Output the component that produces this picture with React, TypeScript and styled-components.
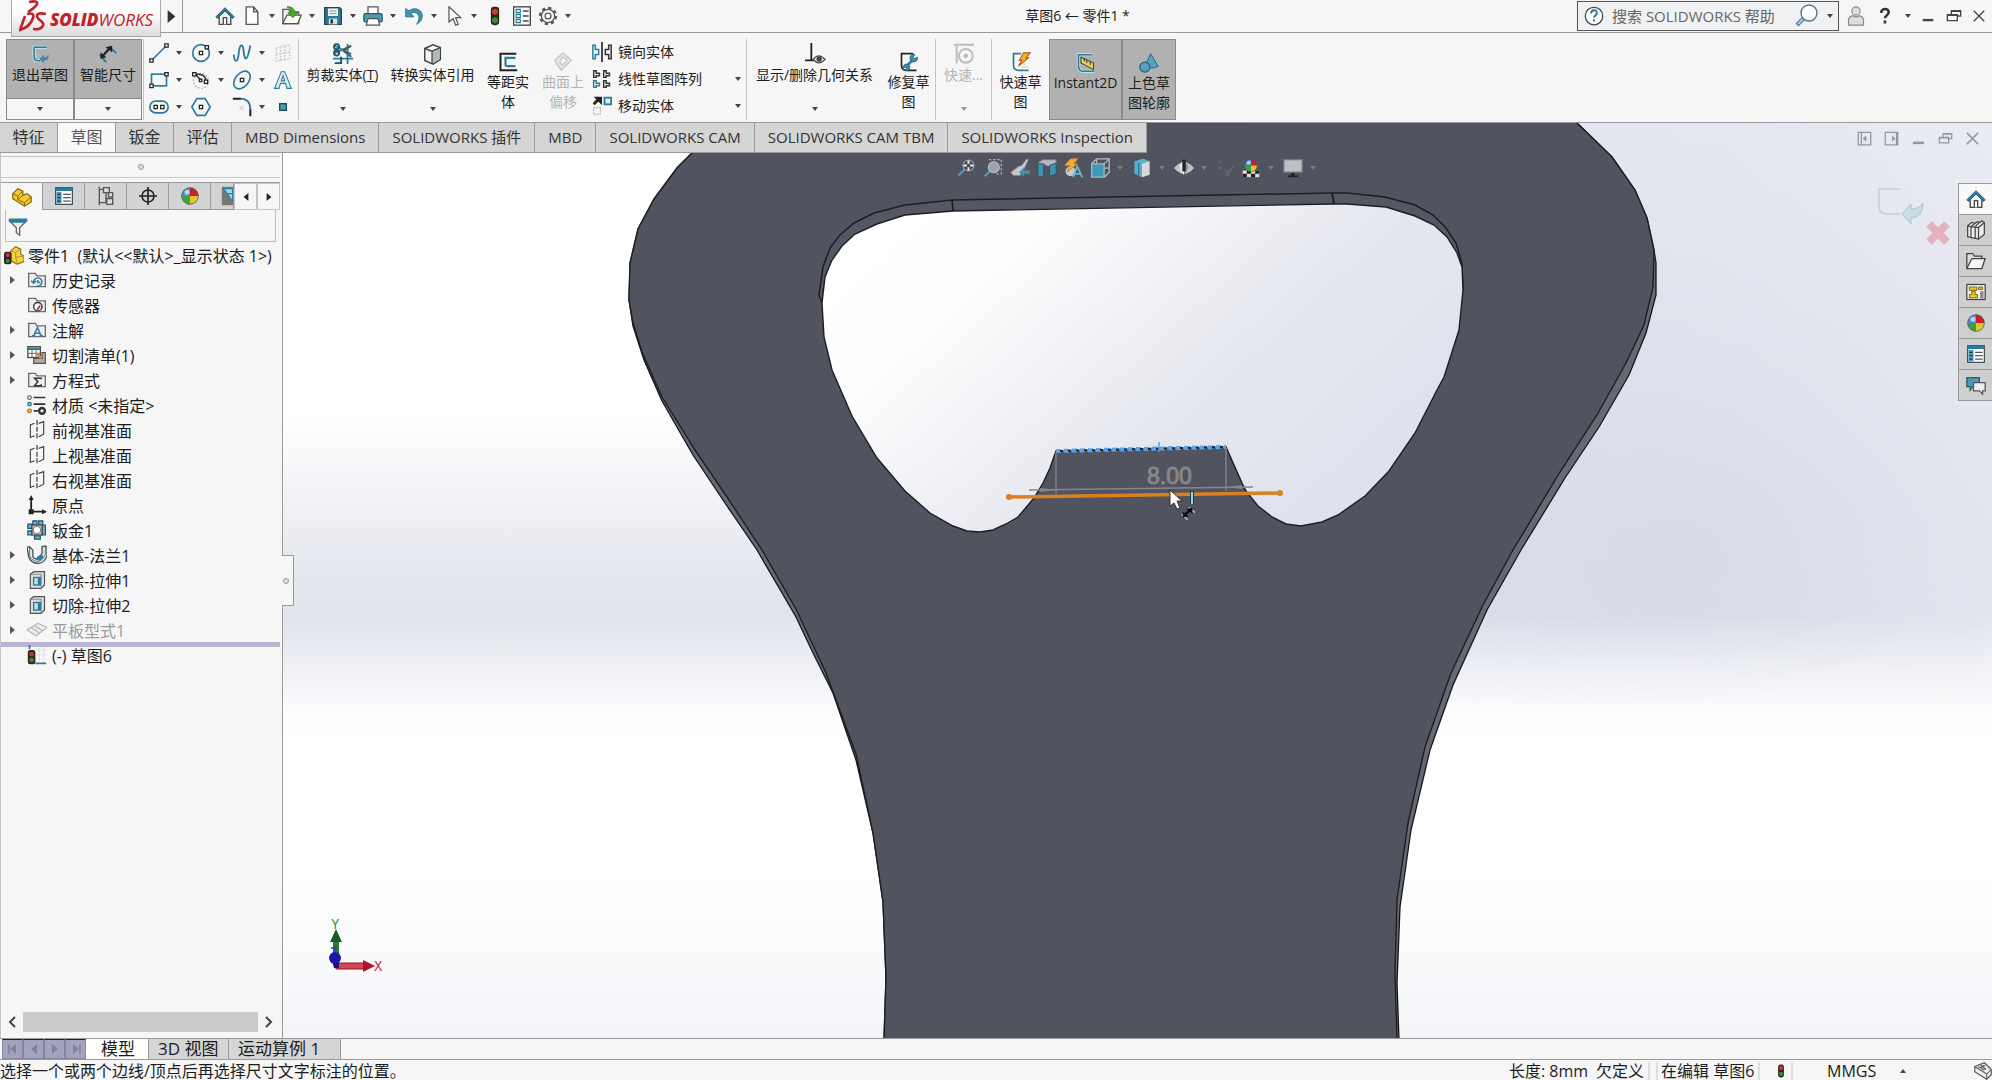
import React from "react";
import styled, { createGlobalStyle } from "styled-components";

const TEAL = "#2b7c9b";
const LINE = "#9a9a9a";

const GlobalStyle = createGlobalStyle`
  * { box-sizing: border-box; }
  body { margin: 0; background: #f6f6f6; overflow: hidden; }
  body, button, input {
    font-family: "Open Sans", "Noto Sans CJK SC", sans-serif;
    font-size: 15px;
    color: #1c1c1c;
  }
  button { border: 0; padding: 0; background: none; color: inherit; }
`;

/* ---------- icons ---------- */

const folder = (
  <path d="M2 20V4h8l2 3h10v13z" fill="#eee" stroke="#6d6d6d" strokeWidth="1.6" />
);
const plane = (
  <>
    <path d="M9 4L4 6v15l5-2M14 4l6-2v15l-6 3" fill="none" stroke="#444" strokeWidth="1.4" />
    <path d="M12 0v24" stroke="#444" strokeWidth="1.5" strokeDasharray="6 2" />
  </>
);
const cut = (
  <>
    <path d="M4 5l4-3h13v16l-4 4H4z" fill="#dcdcdc" stroke="#555" strokeWidth="1.4" />
    <path d="M4 5h13v17" fill="none" stroke="#777" />
    <rect x="8" y="9" width="8" height="9" fill="#bfe3ef" stroke={TEAL} strokeWidth="1.6" />
    <path d="M13 9h3v9h-3z" fill={TEAL} />
  </>
);
const light = (
  <>
    <rect x="7" y="1" width="10" height="22" rx="4" fill="#2c2420" />
    <circle cx="12" cy="7" r="3.6" fill="#d0392f" />
    <circle cx="12" cy="17" r="3.6" fill="#2f8f33" />
  </>
);
const ball = (
  <>
    <path d="M12 12V2a10 10 0 0 1 10 10z" fill="#c8202a" />
    <path d="M12 12H2A10 10 0 0 1 12 2z" fill="#4b8ae0" />
    <path d="M12 12v10A10 10 0 0 1 2 12z" fill="#3ba33b" />
    <path d="M12 12h10a10 10 0 0 1-10 10z" fill="#e6c52b" />
    <circle cx="12" cy="12" r="10" fill="none" stroke="#555" strokeWidth="1" />
    <circle cx="8.5" cy="7.5" r="3" fill="#fff" opacity=".6" />
  </>
);
const list = (
  <>
    <rect x="2" y="2" width="20" height="20" fill="#fff" stroke="#30454f" strokeWidth="1.4" />
    <rect x="2" y="2" width="20" height="4" fill={TEAL} />
    <rect x="3" y="7" width="6" height="14" fill="#4e9dba" />
    <path d="M4 10h4M4 14h4M4 18h4" stroke="#12394a" strokeWidth="1.5" />
    <path d="M11 10h9M11 14h9M11 18h9" stroke="#555" strokeWidth="1.5" />
  </>
);
const home = (
  <>
    <path d="M5 12v10h14V12l-7-7z" fill="#f2f2f2" stroke="#444" strokeWidth="1.6" />
    <path d="M10 22v-8h4v8" fill="#fff" stroke="#444" strokeWidth="1.5" />
    <path d="M1 13L12 2l11 11-2 2-9-9-9 9z" fill={TEAL} stroke="#1d566d" />
  </>
);
const block = (
  <>
    <path d="M1 8l6-6 6 3v5l5-2 5 4v6l-8 5L1 14z" fill="#f3cd2e" stroke="#7a6010" strokeWidth="1.4" />
    <path d="M1 8l6 3 6-6M7 11v4l8 4 8-7M15 19v4M13 10l-6 5" fill="none" stroke="#8a6d10" strokeWidth="1.2" />
  </>
);
const smart = (
  <>
    <path d="M2 13l8 9M13 3l9 8" stroke={TEAL} strokeWidth="2.2" />
    <path d="M5 15L14 5" stroke="#222" strokeWidth="2.6" />
    <path d="M3 10v8l7-2zM17 10V2l-8 2z" fill="#222" />
  </>
);

const ICONS: Record<string, React.ReactNode> = {
  home,
  list,
  ball,
  light,
  smart,
  block,
  plane,
  cut,
  file: <path d="M5 1h9l5 6v15H5zM14 1v6h5" fill="#fff" stroke="#555" strokeWidth="1.6" />,
  open: (
    <>
      <path d="M1 21V4h7l2 3h10v14z" fill="#eee" stroke="#555" strokeWidth="1.5" />
      <path d="M1 21L6 11h17l-4 10z" fill="#fafafa" stroke="#555" strokeWidth="1.5" />
      <path d="M6 1c6 0 9 2 9 7h4l-6 6-6-6h4c0-3-1-5-5-7z" fill="#43b11d" stroke="#2b7a12" />
    </>
  ),
  save: (
    <>
      <path d="M2 2h18l2 2v18H2z" fill={TEAL} stroke="#244552" strokeWidth="1.6" />
      <rect x="6" y="3" width="12" height="9" fill="#f2f2f2" />
      <path d="M8 6h8M8 9h8" stroke="#777" />
      <rect x="7" y="15" width="10" height="7" fill="#ddd" />
      <rect x="9" y="16" width="3" height="5" fill="#333" />
    </>
  ),
  print: (
    <>
      <path d="M6 9V1h12v8" fill="#fff" stroke="#555" strokeWidth="1.5" />
      <rect x="1" y="9" width="22" height="10" rx="2" fill="#4b9ab6" stroke="#28566a" strokeWidth="1.5" />
      <path d="M6 15h12l2 8H4z" fill="#fff" stroke="#555" strokeWidth="1.5" />
    </>
  ),
  undo: (
    <path d="M2 3v10h10L8 9c5-3 10 0 10 5 0 3-1 5-3 8 5-3 7-6 7-11C21 3 11 1 6 6z" fill="#3f94b4" stroke="#28677f" />
  ),
  pointer: <path d="M6 1v18l5-4 3 8 3-1-3-8h6z" fill="#fff" stroke="#555" strokeWidth="1.5" />,
  props: (
    <>
      <rect x="2" y="1" width="20" height="22" fill="#fff" stroke="#444" strokeWidth="1.6" />
      <path d="M5 4h5v4H5zM5 10h5v4H5zM5 16h5v4H5z" fill="#d3edf5" stroke={TEAL} strokeWidth="1.4" />
      <path d="M13 6h7M13 12h7M13 18h7" stroke="#444" strokeWidth="1.6" />
    </>
  ),
  gear: (
    <>
      <circle cx="12" cy="12" r="9.5" fill="none" stroke="#555" strokeWidth="3" strokeDasharray="3.73 3.73" />
      <circle cx="12" cy="12" r="8" fill="#f6f6f6" stroke="#555" strokeWidth="1.5" />
      <circle cx="12" cy="12" r="3.5" fill="#fff" stroke="#555" strokeWidth="1.5" />
    </>
  ),
  help: (
    <>
      <circle cx="12" cy="12" r="10.5" fill="#fff" stroke="#444" strokeWidth="1.5" />
      <path d="M8.5 9c0-5 7-5 7-1 0 3-3 3-3.5 6M12 16v2.5" fill="none" stroke={TEAL} strokeWidth="2.4" />
    </>
  ),
  search: (
    <>
      <path d="M9 14L2 21" stroke="#52798c" strokeWidth="4" />
      <path d="M8 15L3 20" stroke="#a9d3e4" strokeWidth="2" />
      <circle cx="14" cy="9" r="8" fill="#fdfdfd" stroke="#52798c" strokeWidth="1.4" />
    </>
  ),
  user: (
    <>
      <circle cx="12" cy="6" r="5" fill="#ddd" stroke="#888" strokeWidth="1.4" />
      <path d="M3 23V16q2-5 6-4 3 2 6 0 4-1 6 4v7z" fill="#ddd" stroke="#888" strokeWidth="1.4" />
    </>
  ),
  question: <path d="M7 8c0-7 10-7 10-1 0 4-5 4-5 8M12 18v4" fill="none" stroke="#333" strokeWidth="3.4" />,
  min: <path d="M3 19h18" stroke="currentColor" strokeWidth="4" />,
  restore: (
    <path d="M8 10V4h14v8h-5M2 10h15v9H2zM2 11h15M8 5h14" fill="none" stroke="currentColor" strokeWidth="2" />
  ),
  close: <path d="M3 3l18 18M21 3L3 21" stroke="currentColor" strokeWidth="2.4" />,
  dockL: (
    <>
      <path d="M2 2h20v20H2zM7 2v20" fill="none" stroke="currentColor" strokeWidth="2" />
      <path d="M15 7v10l-6-5z" fill="currentColor" />
    </>
  ),
  dockR: (
    <>
      <path d="M2 2h20v20H2zM20 2v20" fill="none" stroke="currentColor" strokeWidth="2" />
      <path d="M13 7v10l5-5z" fill="currentColor" />
    </>
  ),
  exit: (
    <>
      <path d="M20 4H5v11q0 5 5 5h2" fill="none" stroke="#b9e0ee" strokeWidth="4" />
      <path d="M20 4H5v11q0 5 5 5h2" fill="none" stroke={TEAL} strokeWidth="1.8" />
      <path d="M11 18l6-5v3q4 0 5-4 2 8-5 8v3z" fill="#3b8cab" />
    </>
  ),
  lineTool: (
    <>
      <path d="M3 21L21 3" stroke={TEAL} strokeWidth="2" />
      <path d="M1 19h4v4H1zM19 1h4v4h-4z" fill="#fff" stroke="#222" strokeWidth="1.5" />
    </>
  ),
  circleTool: (
    <>
      <circle cx="12" cy="12" r="10" fill="none" stroke={TEAL} strokeWidth="2" />
      <path d="M10 10h4v4h-4zM17 3h4v4h-4z" fill="#fff" stroke="#222" strokeWidth="1.5" />
    </>
  ),
  spline: <path d="M2 14c1 9 5 11 6-1s5-14 6-3 4 14 8-7" fill="none" stroke={TEAL} strokeWidth="2.2" />,
  ghostPlane: (
    <path d="M4 6l16-4v17L4 22zM9 5v16M14 4v16M4 14l16-3" fill="none" stroke="#c4c4c4" strokeWidth="1.5" strokeDasharray="2 1.5" />
  ),
  rectTool: (
    <>
      <rect x="3" y="5" width="18" height="14" fill="none" stroke={TEAL} strokeWidth="2" />
      <path d="M1 17h4v4H1zM19 3h4v4h-4z" fill="#fff" stroke="#222" strokeWidth="1.5" />
    </>
  ),
  arcTool: (
    <>
      <circle cx="12" cy="13" r="9" fill="none" stroke="#aaa" strokeWidth="1.5" strokeDasharray="2 2" />
      <path d="M4 5h5q8 0 9 8M5 5l7 7" fill="none" stroke="#333" strokeWidth="1.8" />
      <path d="M2 3h4v4H2zM16 12h4v4h-4zM10 11h3v3h-3z" fill="#fff" stroke="#222" strokeWidth="1.5" />
    </>
  ),
  ellipse: (
    <>
      <ellipse cx="12" cy="12" rx="12" ry="8" transform="rotate(-50 12 12)" fill="none" stroke={TEAL} strokeWidth="2" />
      <rect x="10" y="10" width="4" height="4" fill="#fff" stroke="#222" strokeWidth="1.5" />
    </>
  ),
  textTool: (
    <path d="M2 22l8-20h4l8 20h-5l-2-6H9l-2 6zM10 13h4l-2-6zM1 22h7M16 22h7" fill="#dfeef3" stroke={TEAL} strokeWidth="1.3" />
  ),
  slot: (
    <>
      <rect x="1" y="5" width="22" height="14" rx="7" fill="none" stroke={TEAL} strokeWidth="2" />
      <path d="M6 10h4v4H6zM14 10h4v4h-4z" fill="#fff" stroke="#222" strokeWidth="1.5" />
    </>
  ),
  hexagon: (
    <>
      <path d="M7 2h10l6 10-6 10H7L1 12z" fill="none" stroke={TEAL} strokeWidth="2" />
      <rect x="10" y="10" width="4" height="4" fill="#fff" stroke="#222" strokeWidth="1.5" />
    </>
  ),
  fillet: (
    <>
      <path d="M1 2h10M22 14v9" stroke="#222" strokeWidth="2.4" />
      <path d="M10 2q12 0 12 13" fill="none" stroke={TEAL} strokeWidth="2" />
      <path d="M9 11l5 5M14 11l-5 5" stroke="#bbb" />
    </>
  ),
  point: <rect x="8" y="8" width="8" height="8" fill="#4b9ab6" stroke="#1d4a5c" strokeWidth="1.6" />,
  trim: (
    <>
      <path d="M3 3l18 9M3 11l16-7M1 17h22M17 1v22" stroke={TEAL} strokeWidth="2" />
      <circle cx="5" cy="4" r="2.8" fill="none" stroke="#1e5469" strokeWidth="2" />
      <circle cx="5" cy="11" r="2.8" fill="none" stroke="#1e5469" strokeWidth="2" />
      <path d="M12 8l9-5M12 8l9 7" stroke="#555" strokeWidth="2.2" />
      <path d="M3 22h7M10 15v8" stroke="#1e5469" strokeWidth="2" />
    </>
  ),
  convert: (
    <>
      <path d="M3 6l9-4 8 3v13l-8 5-9-4z" fill="#f7f7f7" stroke="#444" strokeWidth="1.6" />
      <path d="M3 6l8 3v13M11 9l9-4" fill="none" stroke="#444" strokeWidth="1.5" />
      <path d="M12 10l7-4v12l-7 4z" fill="#aeb9be" />
    </>
  ),
  offset: (
    <>
      <path d="M22 2H3v20h20" fill="none" stroke="#222" strokeWidth="2.4" />
      <path d="M21 7H9v8q0 2 3 2h9" fill="none" stroke={TEAL} strokeWidth="2.6" />
    </>
  ),
  surface: (
    <>
      <path d="M2 10L12 1l10 9-12 12-3-4z" fill="#e6e6e6" stroke="#c6c6c6" strokeWidth="1.6" />
      <path d="M8 11l4-5 5 4-6 6z" fill="#f6f6f6" stroke="#c6c6c6" strokeWidth="1.5" />
    </>
  ),
  mirror: (
    <>
      <path d="M12 0v24" stroke="#222" strokeWidth="2" />
      <path d="M1 4h3v5h4v6H4v5H1z" fill="none" stroke={TEAL} strokeWidth="1.8" />
      <path d="M23 4h-3v5h-4v6h4v5h3z" fill="none" stroke="#333" strokeWidth="1.8" />
    </>
  ),
  pattern: (
    <>
      <path d="M2 2h3v3h4v3H5v2H2zM14 2h3v3h4v3h-4v2h-3zM14 14h3v3h4v3h-4v2h-3z" fill="none" stroke="#333" strokeWidth="1.7" />
      <path d="M2 14h3v3h4v3H5v2H2z" fill="none" stroke={TEAL} strokeWidth="1.7" />
    </>
  ),
  move: (
    <>
      <path d="M2 10l6-6" stroke="#222" strokeWidth="3.4" />
      <path d="M2 1h10v10z" fill="#222" />
      <rect x="15" y="2" width="8" height="8" fill="#dff0f5" stroke={TEAL} strokeWidth="2.2" />
      <rect x="2" y="14" width="8" height="8" fill="none" stroke="#aaa" strokeWidth="1.4" strokeDasharray="2 1.5" />
    </>
  ),
  relations: (
    <>
      <path d="M8 0v19M1 19h13" stroke="#222" strokeWidth="2" />
      <path d="M10 18q6-8 13 0-7 7-13 0z" fill="#fff" stroke="#555" strokeWidth="1.5" />
      <circle cx="16.5" cy="17.5" r="3" fill="#444" />
    </>
  ),
  repair: (
    <>
      <path d="M17 2H3v14q0 6 6 6h12" fill="none" stroke="#222" strokeWidth="2" />
      <path d="M9 17l8-8" stroke="#2f86a4" strokeWidth="3.4" />
      <path d="M22 6l-3 2-2-2 2-3a4.500 4.500 0 1 0 3 3z" fill="#3c8eab" stroke="#1f5b73" />
      <path d="M5 19l3-1 1 2-2 2a4 4 0 1 0-2-3z" fill="#3c8eab" stroke="#1f5b73" />
    </>
  ),
  snap: (
    <>
      <path d="M1 2h22M4 3v19" stroke="#bdbdbd" strokeWidth="2.2" />
      <circle cx="14" cy="14" r="7.5" fill="none" stroke="#bdbdbd" strokeWidth="2.2" />
      <circle cx="14" cy="14" r="2.5" fill="#bdbdbd" />
    </>
  ),
  rapid: (
    <>
      <path d="M12 2H3v14q0 6 6 6h12" fill="none" stroke={TEAL} strokeWidth="2" />
      <path d="M11 18h10M16 12v10" stroke="#d5d5d5" />
      <path d="M15 1h8l-5 6h3L9 17l4-7h-3z" fill="#f1b51f" stroke="#c2512a" strokeWidth="1.3" />
    </>
  ),
  instant: (
    <>
      <path d="M19 2H3v14q0 6 6 6h13" fill="none" stroke="#b9e0ee" strokeWidth="4" />
      <path d="M19 2H3v14q0 6 6 6h13" fill="none" stroke={TEAL} strokeWidth="1.8" />
      <path d="M6 5l15 7v8L6 12z" fill="#e9d34b" stroke="#444" strokeWidth="1.3" />
      <path d="M10 7v3M13 9v3M17 11v3" stroke="#333" strokeWidth="1.3" />
    </>
  ),
  shade: (
    <>
      <path d="M14 1l9 15q-8 4-16 0z" fill="#53a3c0" stroke="#2b6a83" strokeWidth="1.2" />
      <circle cx="7" cy="17" r="6" fill="#53a3c0" stroke="#1f5b73" strokeWidth="1.4" />
    </>
  ),
  tree: (
    <>
      <path d="M4 1v22M4 4h7M4 20h8M12 8v12" fill="none" stroke="#555" strokeWidth="1.6" />
      <path d="M9 2h7v6H9zM15 8h5v5h-5zM13 15h7v7h-7z" fill="#ddd" stroke="#555" strokeWidth="1.6" />
    </>
  ),
  target: (
    <>
      <circle cx="12" cy="12" r="8" fill="none" stroke="#222" strokeWidth="2.2" />
      <path d="M12 0v24M0 12h24" stroke="#222" strokeWidth="2.2" />
    </>
  ),
  cam: (
    <>
      <rect x="1" y="1" width="22" height="22" fill="#777" />
      <path d="M3 3h20v20L12 16 8 10z" fill="#a5d4e6" stroke={TEAL} strokeWidth="1.5" />
      <path d="M14 3v15M8 9h14" stroke={TEAL} strokeWidth="1.5" />
    </>
  ),
  funnel: (
    <>
      <path d="M2 6h20l-8 8v9l-4-3v-6z" fill="#eee" stroke="#666" strokeWidth="1.6" />
      <path d="M1 3h22v3l-2 2H3L1 6z" fill={TEAL} />
    </>
  ),
  part: (
    <>
      <path d="M8 7l6-5 6 3v6l4 2v7l-8 3-8-4z" fill="#f3d243" stroke="#8a6d10" strokeWidth="1.4" />
      <path d="M14 9l6-4M14 9v6l10-2M8 7l6 2M14 15l2 8" fill="none" stroke="#a98a1c" />
      <rect x="0" y="8" width="9" height="15" rx="3" fill="#2c2420" />
      <circle cx="4.5" cy="12" r="2.5" fill="#d0392f" />
      <circle cx="4.5" cy="19" r="2.5" fill="#2f8f33" />
    </>
  ),
  history: (
    <>
      {folder}
      <path d="M8 15a5 5 0 1 1 3 4M5 13l3 3 3-3M13 12v3h3" fill="none" stroke={TEAL} strokeWidth="1.7" />
    </>
  ),
  sensor: (
    <>
      {folder}
      <circle cx="13" cy="14" r="5" fill="#fff" stroke="#333" strokeWidth="1.7" />
      <path d="M11 17l5-6v4l-3 3z" fill="#c93030" />
    </>
  ),
  note: (
    <>
      {folder}
      <path d="M8 19l4.500-10L17 19M9.500 16h6M6 19h4M15 19h4" fill="none" stroke={TEAL} strokeWidth="1.8" />
    </>
  ),
  equation: (
    <>
      {folder}
      <path d="M17 11v-1H9l4 4-4 5h8v-2" fill="none" stroke="#333" strokeWidth="1.8" />
    </>
  ),
  cutlist: (
    <>
      <rect x="1" y="2" width="15" height="13" fill="#fff" stroke="#444" strokeWidth="1.5" />
      <path d="M1 3h15v3H1z" fill={TEAL} />
      <path d="M1 10h15M6 5v10M11 5v10" stroke="#555" />
      <path d="M8 16h10V9h4v13H8z" fill="#aaa" stroke="#555" strokeWidth="1.4" />
      <path d="M12 10l5 6" stroke="#d9853b" strokeWidth="3" />
    </>
  ),
  material: (
    <>
      <path d="M8 3h14M8 11h14M8 19h5" stroke="#333" strokeWidth="2" />
      <circle cx="3" cy="3" r="2.2" fill="#fff" stroke="#555" strokeWidth="1.3" />
      <circle cx="3" cy="11" r="2.2" fill="#7fc3de" stroke="#2b6a83" strokeWidth="1.3" />
      <circle cx="3" cy="19" r="2.2" fill="#efcf3f" stroke="#8a6d10" strokeWidth="1.3" />
      <circle cx="18" cy="19" r="3.5" fill="none" stroke="#333" strokeWidth="3" />
    </>
  ),
  origin: (
    <>
      <path d="M5 3v17h17" fill="none" stroke="#222" strokeWidth="2.2" />
      <path d="M5 0l3 6H2zM24 20l-6-3v6zM2 17h6v6H2z" fill="#222" />
    </>
  ),
  sheet: (
    <>
      <path d="M7 1h5v5H7zM14 1h5v5h-5zM1 5h5v5H1zM1 13h5v5H1zM9 19h7v4H9zM18 6h4v12h-4z" fill="#6cb6d1" stroke="#1e5469" strokeWidth="1.4" />
      <rect x="6" y="6" width="12" height="12" fill="#ccc" stroke="#444" strokeWidth="1.4" />
      <circle cx="12" cy="12" r="4.5" fill="#fff" stroke="#666" />
    </>
  ),
  flange: (
    <>
      <path d="M0 3l3-1 4 4v8q3 5 8 1l3-5V2l4-1 2 2v10q-3 9-11 9-8 0-11-8z" fill="#dfe6e9" stroke="#3c4a50" strokeWidth="1.5" />
      <path d="M3 2v11q3 6 10 7 6-1 9-9V1" fill="none" stroke="#5b6a70" />
      <path d="M12 14l5-3 3 3-4 5-5-1z" fill={TEAL} />
    </>
  ),
  flat: (
    <path d="M0 12l13-8 11 5-13 10zM5 9l10 7M9 7l10 6" fill="#ececec" stroke="#b5b5b5" strokeWidth="1.4" />
  ),
  sketch: (
    <>
      <path d="M3 0v5M10 22h13" stroke={TEAL} strokeWidth="2" />
      <path d="M11 6h12M11 12h12M15 2v18M20 2v18" stroke="#ddd" />
      <rect x="1" y="6" width="9" height="17" rx="3" fill="#2c2420" />
      <circle cx="5.5" cy="11" r="2.8" fill="#b9372f" />
      <circle cx="5.5" cy="18" r="2.8" fill="#2f8f33" />
    </>
  ),
  books: (
    <>
      <path d="M2 7l5-4 4 1 3-2 3 1 2-2 3 2v14l-7 6-13-3z" fill="#eee" stroke="#444" strokeWidth="1.5" />
      <path d="M2 7l4 1v12M6 8l5-4M11 8v14M11 8l5-5M15 9v14M6 8l9 1 7-6" fill="none" stroke="#444" strokeWidth="1.5" />
    </>
  ),
  folderOpen: (
    <>
      <path d="M1 21V3h7l2 3h9v5" fill="#ddd" stroke="#444" strokeWidth="1.5" />
      <path d="M1 21L7 9h16l-4 12z" fill="#f6f6f6" stroke="#444" strokeWidth="1.5" />
    </>
  ),
  palette: (
    <>
      <rect x="1" y="3" width="22" height="18" fill="#f5f5f5" stroke="#444" strokeWidth="1.5" />
      <path d="M4 6h9v4H4zM7 11h4v4h3v4H4v-4h3zM15 6h5v3h-5z" fill="#e8c52c" stroke="#6b560c" />
      <rect x="17" y="11" width="4" height="9" fill="#888" />
    </>
  ),
  forum: (
    <>
      <path d="M1 3h15v11H8l-3 4v-4H1z" fill="#4b9ab6" stroke="#28566a" strokeWidth="1.5" />
      <path d="M9 9h14v10h-3v4l-4-4H9z" fill="#eee" stroke="#555" strokeWidth="1.5" />
    </>
  ),
  zoomFit: (
    <>
      <path d="M10 14L3 21" stroke="#4d9fbd" strokeWidth="2.6" />
      <circle cx="15" cy="9" r="6.5" fill="#4a4c55" stroke="#9b9ca3" strokeWidth="1.4" />
      <path d="M15 3v12M9 9h12" stroke="#eee" strokeWidth="2.4" strokeDasharray="4 4" />
    </>
  ),
  zoomArea: (
    <>
      <path d="M7 2h15v17h-8" fill="none" stroke="#a9abb2" strokeWidth="1.6" strokeDasharray="3 2" />
      <path d="M9 15L2 22" stroke="#4d9fbd" strokeWidth="2.6" />
      <circle cx="13" cy="11" r="6.5" fill="#9ca1ac" stroke="#b9bcc4" strokeWidth="1.5" />
    </>
  ),
  prevView: (
    <>
      <path d="M1 17l8-6 6-3 5-7 2 1-4 9-6 10H4z" fill="#c4c6cb" stroke="#85878f" />
      <path d="M24 15v4h-7v4l-6-6 6-6v4z" fill="#3f93b2" />
    </>
  ),
  section: (
    <>
      <path d="M1 6l6-4h16v5l-4 3h-5l-5-2H1z" fill="#b5b9bf" stroke="#7a7d86" />
      <path d="M1 7h7v15H1zM15 9l8-3v13l-8 3z" fill="#3f93b2" stroke="#1f5266" />
    </>
  ),
  annotView: (
    <>
      <circle cx="9" cy="16" r="6" fill="#c9c9c9" />
      <path d="M9 1h9l-5 6h4L5 17l3-8H2z" fill="#efad35" stroke="#cf7a2a" />
      <path d="M12 23l5-13 6 13M14 19h6" fill="none" stroke="#6cb7d4" strokeWidth="2.2" />
    </>
  ),
  cube: (
    <>
      <path d="M2 7l6-6h15v16l-6 6" fill="none" stroke="#b9bbc2" strokeWidth="1.6" />
      <path d="M8 1v6M23 1l-6 6M17 12h6" stroke="#b9bbc2" strokeWidth="1.5" />
      <rect x="2" y="7" width="15" height="16" fill="#4397b6" stroke="#8fc1d4" strokeWidth="1.5" />
    </>
  ),
  display: (
    <>
      <path d="M3 4l10-3 8 3v16l-9 3-9-4z" fill="#5fb0cc" />
      <path d="M12 7l9-3v16l-9 3z" fill="#d6dade" />
      <path d="M8 6v16" stroke="#2e7f9d" strokeWidth="2" />
    </>
  ),
  eye: (
    <>
      <path d="M0 12Q12-2 24 12 12 26 0 12z" fill="#c4c4c4" />
      <path d="M12 4q-6 2-5 8t5 8z" fill="#e8e8e8" />
      <path d="M12 5q6 3 5 7t-5 8z" fill="#8b8c90" />
      <path d="M12 2v14" stroke="#222" strokeWidth="4" />
    </>
  ),
  ghost: <path d="M4 3l3 3M4 12h4M12 22l10-12M12 14l5 7" stroke="#646670" strokeWidth="2.2" />,
  scene: (
    <>
      <path d="M2 15h20v8H2z" fill="#ddd" />
      <path d="M2 19h5v4H2zM7 15h5v4H7zM12 19h5v4h-5zM17 15h5v4h-5z" fill="#222" />
      <g transform="translate(3 0) scale(.75)">{ball}</g>
    </>
  ),
  monitor: (
    <>
      <rect x="1" y="2" width="22" height="15" fill="#bfc0c4" stroke="#77797f" strokeWidth="1.5" />
      <path d="M10 18h4v3h4v2H6v-2h4z" fill="#222" />
    </>
  ),
  tag: (
    <>
      <path d="M1 6l13-5 9 9v7l-6 6L1 13z" fill="#eee" stroke="#555" strokeWidth="1.5" />
      <path d="M1 6l16 10v7M17 16l6-6M6 6l8 5M9 8q2-4 6-3M9 4l7 6" fill="none" stroke="#555" strokeWidth="1.4" />
    </>
  ),
};

const IconSvg = styled.svg`
  display: block;
  flex: none;
`;

function Icon({ name, size = 20 }: { name: string; size?: number }) {
  return (
    <IconSvg width={size} height={size} viewBox="0 0 24 24" aria-hidden>
      {ICONS[name]}
    </IconSvg>
  );
}

const Caret = styled.span<{ $dim?: boolean; $up?: boolean }>`
  display: block;
  flex: none;
  width: 0;
  height: 0;
  border: 3px solid transparent;
  border-top: ${(p) => (p.$up ? "0" : `4px solid ${p.$dim ? "#9a9a9a" : "#444"}`)};
  border-bottom: ${(p) => (p.$up ? "4px solid #444" : "0")};
`;

/* ---------- window frame ---------- */

const Window = styled.div`
  height: 100vh;
  display: flex;
  flex-direction: column;
  overflow: hidden;
  background: #f6f6f6;
`;

const TitleBar = styled.header`
  position: relative;
  z-index: 2;
  flex: none;
  height: 33px;
  display: flex;
  align-items: center;
  border-bottom: 1px solid ${LINE};
`;

const Brand = styled.div`
  align-self: flex-start;
  flex: none;
  width: 150px;
  height: 37px;
  margin-left: 11px;
  display: flex;
  align-items: center;
  justify-content: center;
  gap: 3px;
  padding-bottom: 4px;
  border: 1px solid #a9a9a9;
  border-top: 0;
  background: linear-gradient(#fff, #fbfbfb 40%, #dcdcdc);
  color: #c0222b;
  font-size: 17px;
  line-height: 20px;
`;
const BrandName = styled.span`
  font-style: italic;
  padding-top: 8px;
  b { font-weight: 800; }
`;

const MenuArrow = styled.button`
  flex: none;
  width: 22px;
  height: 32px;
  display: flex;
  align-items: center;
  justify-content: center;
  border-right: 1px solid ${LINE};
`;

const QuickBar = styled.nav`
  display: flex;
  align-items: center;
  margin-left: 32px;
`;
const QuickButton = styled.button<{ $w: number }>`
  width: ${(p) => p.$w}px;
  height: 28px;
  display: flex;
  align-items: center;
  gap: 7px;
`;

const DocTitle = styled.h1`
  flex: 1;
  margin: 0;
  text-align: center;
  font-size: 14px;
  font-weight: 400;
  line-height: 20px;
`;

const SearchBox = styled.label`
  flex: none;
  width: 262px;
  height: 30px;
  display: flex;
  align-items: center;
  gap: 8px;
  padding: 0 5px 0 6px;
  border: 1px solid #555;
  background: #f0f1f2;
`;
const SearchInput = styled.input`
  flex: 1;
  min-width: 0;
  border: 0;
  padding: 0;
  outline: 0;
  background: none;
  &::placeholder { color: #666; opacity: 1; }
`;

const WindowButtons = styled.div`
  flex: none;
  display: flex;
  align-items: center;
  justify-content: space-between;
  width: 140px;
  margin: 0 6px 0 7px;
  color: #444;
`;

/* ---------- ribbon ---------- */

const Ribbon = styled.div`
  flex: none;
  height: 90px;
  display: flex;
  align-items: stretch;
  padding: 6px 0 2px 6px;
  border-bottom: 1px solid ${LINE};
`;

const Split = styled.div`
  flex: none;
  width: 68px;
  display: flex;
  flex-direction: column;
  border: 1px solid #8a8a8a;
`;
const SplitMain = styled.button`
  flex: 1;
  display: flex;
  flex-direction: column;
  align-items: center;
  gap: 1px;
  padding-top: 4px;
  background: #b1b1b1;
  font-size: 14px;
  line-height: 20px;
  border-bottom: 1px solid #8a8a8a;
`;
const SplitDrop = styled.button`
  height: 20px;
  display: flex;
  align-items: center;
  justify-content: center;
`;

const Divider = styled.span<{ $gap?: number }>`
  flex: none;
  width: 1px;
  margin: 0 ${(p) => p.$gap ?? 0}px;
  background: #c4c4c4;
`;

const ToolGrid = styled.div`
  flex: none;
  display: grid;
  grid-template-columns: 42px 41px 41px 25px;
  grid-template-rows: repeat(3, 27px);
  margin: 0 2px 0 2px;
`;
const Tool = styled.button`
  display: flex;
  align-items: center;
  gap: 7px;
  padding-left: 2px;
`;

const BigTool = styled.button<{ $w: number; $low?: boolean; $dim?: boolean; $on?: boolean }>`
  flex: none;
  width: ${(p) => p.$w}px;
  display: flex;
  flex-direction: column;
  align-items: center;
  padding-top: ${(p) => (p.$low ? 13 : 4)}px;
  font-size: 14px;
  line-height: 20px;
  white-space: pre-line;
  color: ${(p) => (p.$dim ? "#b5b5b5" : "#1c1c1c")};
  background: ${(p) => (p.$on ? "#b1b1b1" : "none")};
  border: ${(p) => (p.$on ? "1px solid #8a8a8a" : "0")};
`;
const BigDrop = styled.span`
  flex: 1;
  display: flex;
  align-items: center;
  padding-top: 12px;
`;

const RowTools = styled.div`
  flex: none;
  width: 157px;
  display: grid;
  grid-template-rows: repeat(3, 27px);
  padding: 0 5px 0 3px;
`;
const RowTool = styled.button`
  display: flex;
  align-items: center;
  gap: 6px;
  padding-bottom: 2px;
  font-size: 14px;
  line-height: 20px;
  span:nth-of-type(2) { margin-left: auto; }
`;

/* ---------- stage ---------- */

const Stage = styled.main`
  position: relative;
  flex: 1;
  min-height: 0;
  display: flex;
  flex-direction: column;
  background:
    linear-gradient(rgba(255, 255, 255, 0) 0, rgba(255, 255, 255, 0) 54%, rgba(255, 255, 255, 0.55) 60%, rgba(255, 255, 255, 0.95) 65%, #fff 68%, #fff 82%, #f4f5f9 100%),
    radial-gradient(ellipse 42% 75% at 84% 48%, rgba(212, 215, 229, 0.8), rgba(216, 219, 232, 0.4) 50%, rgba(255, 255, 255, 0) 100%),
    linear-gradient(100deg, rgba(255, 255, 255, 0) 50%, rgba(226, 229, 239, 0.8) 72%, rgba(240, 241, 246, 0.9) 100%),
    linear-gradient(#fff 0, #fff 32%, #e4e6ee 50%, #dfe2eb 58%);
`;

const Model = styled.svg`
  position: absolute;
  inset: 0;
  width: 100%;
  height: 100%;
`;

const CommandTabs = styled.div`
  position: relative;
  align-self: flex-start;
  flex: none;
  display: flex;
  height: 30px;
  border-bottom: 1px solid ${LINE};
`;
const CommandTab = styled.button<{ $on?: boolean; $short?: boolean }>`
  min-width: 58px;
  padding: 0 ${(p) => (p.$short ? 12 : 13)}px 2px;
  border-right: 1px solid ${LINE};
  background: ${(p) => (p.$on ? "#f8f8f8" : "#d5d5d5")};
  color: ${(p) => (p.$on ? "#555" : "#333")};
  font-size: ${(p) => (p.$short ? 16 : 15)}px;
  line-height: 26px;
  white-space: nowrap;
`;

const Body = styled.div`
  flex: 1;
  min-height: 0;
  display: flex;
  align-items: stretch;
`;

const Panel = styled.aside`
  position: relative;
  flex: none;
  width: 283px;
  display: flex;
  flex-direction: column;
  background: #f6f6f6;
  border-left: 1px solid #c4c4c4;
  border-right: 1px solid ${LINE};
`;
const Grip = styled.div`
  flex: none;
  height: 22px;
  margin: 3px 2px 4px 0;
  border-top: 1px solid #c9c9c9;
  border-bottom: 1px solid #c9c9c9;
  display: flex;
  align-items: center;
  justify-content: center;
`;
const Dot = styled.i`
  width: 6px;
  height: 6px;
  border-radius: 50%;
  border: 1px solid #999;
  background: #ddd;
`;
const PanelTabs = styled.div`
  flex: none;
  display: flex;
  height: 28px;
  margin-right: 2px;
  border-top: 1px solid ${LINE};
`;
const PanelTab = styled.button<{ $on?: boolean; $cut?: boolean }>`
  flex: none;
  width: ${(p) => (p.$cut ? 23 : 42)}px;
  overflow: hidden;
  display: flex;
  align-items: center;
  justify-content: ${(p) => (p.$cut ? "flex-start" : "center")};
  padding-left: ${(p) => (p.$cut ? 10 : 0)}px;
  background: ${(p) => (p.$on ? "#f6f6f6" : "#d3d3d3")};
  border-right: 1px solid ${LINE};
  border-bottom: ${(p) => (p.$on ? "0" : `1px solid ${LINE}`)};
`;
const PanelArrow = styled.button`
  flex: 1;
  display: flex;
  align-items: center;
  justify-content: center;
  border: 1px solid #c4c4c4;
`;
const Filter = styled.label`
  flex: none;
  display: flex;
  align-items: center;
  height: 32px;
  margin: 0 6px 0 4px;
  padding-left: 2px;
  gap: 6px;
  border: 1px solid #bdbdbd;
  border-top: 0;
`;

const Tree = styled.ul`
  flex: 1;
  margin: 0;
  padding: 0;
  list-style: none;
  overflow: hidden;
  font-size: 16px;
`;
const RootRow = styled.li`
  display: flex;
  align-items: center;
  gap: 4px;
  height: 25px;
  padding-left: 3px;
  white-space: pre;
`;
const TreeRow = styled.li<{ $dim?: boolean }>`
  display: flex;
  align-items: center;
  gap: 5px;
  height: 25px;
  padding-left: 9px;
  white-space: nowrap;
  color: ${(p) => (p.$dim ? "#9a9a9a" : "#1c1c1c")};
`;
const Twist = styled.span<{ $show?: boolean }>`
  width: 12px;
  height: 8px;
  &::before {
    content: "";
    display: ${(p) => (p.$show ? "block" : "none")};
    width: 0;
    border: 4px solid transparent;
    border-left: 5px solid #555;
  }
`;
const Rollback = styled.li`
  height: 5px;
  margin: 0 2px -5px 0;
  background: #b9b4cf;
`;

const ScrollRow = styled.div`
  flex: none;
  height: 20px;
  margin: 0 2px 6px 0;
  display: grid;
  grid-template-columns: 22px 1fr 22px;
`;
const ScrollButton = styled.button`
  display: flex;
  align-items: center;
  justify-content: center;
`;
const Thumb = styled.div`
  background: #cbcbcb;
`;
const PanelHandle = styled.button`
  position: absolute;
  left: 100%;
  top: 402px;
  width: 12px;
  height: 51px;
  display: flex;
  align-items: center;
  justify-content: center;
  padding-right: 3px;
  background: #f6f6f6;
  border: 1px solid ${LINE};
  border-left: 0;
`;

const Canvas = styled.section`
  position: relative;
  flex: 1;
`;
const ViewBar = styled.div`
  position: absolute;
  top: 4px;
  left: 50%;
  margin-left: -182px;
  display: flex;
  align-items: center;
`;
const ViewTool = styled.button<{ $w: number }>`
  width: ${(p) => p.$w}px;
  height: 22px;
  display: flex;
  align-items: center;
  gap: 7px;
`;
const Speck = styled(Caret)`
  border-top-color: #7a7c86;
`;
const DocButtons = styled.div`
  position: absolute;
  top: 8px;
  right: 12px;
  display: flex;
  gap: 12px;
  color: #96979b;
`;
const Confirm = styled.div`
  position: absolute;
  top: 33px;
  right: 38px;
`;
const TaskPane = styled.nav`
  position: absolute;
  top: 30px;
  right: 0;
  width: 34px;
  border-left: 1px solid ${LINE};
  border-top: 1px solid ${LINE};
`;
const TaskButton = styled.button<{ $on?: boolean }>`
  width: 100%;
  height: 31px;
  display: flex;
  align-items: center;
  justify-content: center;
  background: ${(p) => (p.$on ? "#f8f8f8" : "#cfcfcf")};
  border-bottom: 1px solid ${LINE};
`;
const Triad = styled.svg`
  position: absolute;
  left: 40px;
  bottom: 61px;
`;

/* ---------- bottom ---------- */

const BottomTabs = styled.div`
  flex: none;
  height: 22px;
  display: flex;
  padding-left: 2px;
  border-top: 1px solid ${LINE};
  border-bottom: 1px solid ${LINE};
`;
const NavButton = styled.button`
  width: 21px;
  display: flex;
  align-items: center;
  justify-content: center;
  background: #a3a3bd;
  border: 1px solid #8686a0;
  border-top-color: #222;
`;
const BottomTab = styled.button<{ $on?: boolean; $w: number; $pad: number }>`
  width: ${(p) => p.$w}px;
  padding-left: ${(p) => p.$pad}px;
  text-align: left;
  background: ${(p) => (p.$on ? "#fff" : "#d5d5d5")};
  border-right: 1px solid ${LINE};
  font-size: 17px;
  line-height: 18px;
  white-space: nowrap;
`;

const StatusBar = styled.footer`
  flex: none;
  height: 20px;
  display: flex;
  align-items: flex-end;
  font-size: 16px;
  line-height: 18px;
  white-space: nowrap;
`;
const StatusText = styled.span`
  flex: 1;
`;
const StatusCell = styled.span<{ $w: number; $line?: boolean; $pad?: number }>`
  width: ${(p) => p.$w}px;
  padding-left: ${(p) => p.$pad ?? 3}px;
  display: flex;
  align-items: center;
  gap: 24px;
  height: 18px;
  border-right: ${(p) => (p.$line ? "2px solid #ddd" : "0")};
`;

/* ---------- data ---------- */

const QUICK: [string, number, boolean, string][] = [
  ["home", 27, false, "主页"],
  ["file", 40, true, "新建"],
  ["open", 41, true, "打开"],
  ["save", 40, true, "保存"],
  ["print", 41, true, "打印"],
  ["undo", 40, true, "撤消"],
  ["pointer", 41, true, "选择"],
  ["light", 27, false, "重建模型"],
  ["props", 26, false, "文件属性"],
  ["gear", 40, true, "选项"],
];

const TOOLS: [string, boolean, string][] = [
  ["lineTool", true, "直线"], ["circleTool", true, "圆"], ["spline", true, "样条曲线"], ["ghostPlane", false, "基准面"],
  ["rectTool", true, "矩形"], ["arcTool", true, "圆弧"], ["ellipse", true, "椭圆"], ["textTool", false, "文字"],
  ["slot", true, "槽口"], ["hexagon", false, "多边形"], ["fillet", true, "圆角"], ["point", false, "点"],
];

const TABS = [
  "特征", "草图", "钣金", "评估", "MBD Dimensions", "SOLIDWORKS 插件", "MBD",
  "SOLIDWORKS CAM", "SOLIDWORKS CAM TBM", "SOLIDWORKS Inspection",
];

const TREE: [string, string, boolean][] = [
  ["history", "历史记录", true],
  ["sensor", "传感器", false],
  ["note", "注解", true],
  ["cutlist", "切割清单(1)", true],
  ["equation", "方程式", true],
  ["material", "材质 <未指定>", false],
  ["plane", "前视基准面", false],
  ["plane", "上视基准面", false],
  ["plane", "右视基准面", false],
  ["origin", "原点", false],
  ["sheet", "钣金1", false],
  ["flange", "基体-法兰1", true],
  ["cut", "切除-拉伸1", true],
  ["cut", "切除-拉伸2", true],
];

const VIEW: [string, number, boolean, string][] = [
  ["zoomFit", 27, false, "整屏显示全图"],
  ["zoomArea", 27, false, "局部放大"],
  ["prevView", 27, false, "上一视图"],
  ["section", 26, false, "剖面视图"],
  ["annotView", 27, false, "动态注解视图"],
  ["cube", 42, true, "视图定向"],
  ["display", 42, true, "显示样式"],
  ["eye", 41, true, "隐藏/显示项目"],
  ["ghost", 26, false, "编辑外观"],
  ["scene", 42, true, "应用布景"],
  ["monitor", 36, true, "视图设定"],
];

const TASKS: [string, string][] = [
  ["home", "资源"], ["books", "设计库"], ["folderOpen", "文件探索器"], ["palette", "视图调色板"],
  ["ball", "外观"], ["list", "自定义属性"], ["forum", "论坛"],
];

const Arrow = ({ left, bar, size = 10, color = "#222" }: { left?: boolean; bar?: boolean; size?: number; color?: string }) => (
  <IconSvg width={size} height={size} viewBox="0 0 10 10" aria-hidden>
    <path d={left ? "M8 0v10L2 5z" : "M2 0v10l6-5z"} fill={color} />
    {bar && <path d={left ? "M1 0v10" : "M9 0v10"} stroke={color} strokeWidth="1.5" />}
  </IconSvg>
);

/* ---------- part geometry ---------- */

const FACE =
  "M716 123 L693 152 677 168 654 199 638 229 630 263 629 300 633 323 642 352 662 397 695 450 727 497 762 550 796 609 826 673 856 754 873 833 883 902 886 978 884 1040 L1397 1040 1395 973 1397 900 1408 823 1425 747 1451 673 1483 605 1513 550 1560 472 1597 415 1626 363 1644 325 1653 287 1654 250 1647 218 1635 190 1612 157 1576 122 Z";
const SIDE =
  "M716 122 L693 152 677 168 654 199 638 229 630 263 629 300 633 326 644 360 662 401 693 455 725 503 757 550 796 617 813 653 833 693 856 760 873 833 883 902 886 978 884 1040 L1399 1040 1397 983 1400 907 1411 830 1430 750 1453 685 1487 610 1521 550 1565 478 1599 427 1629 375 1646 333 1656 295 1656 263 1654 250 1647 218 1635 190 1612 157 1576 122 Z";
const RIM =
  "M822 303 L819 295 823 267 830 248 840 235 854 223 874 213 905 205 952 200 1332 193 1347 193 1385 197 1415 205 1433 215 1446 228 1456 243 1462 263 1463 290 1400 300 Z";
const HOLE =
  "M953 211 L905 215 877 224 855 234 842 246 832 260 825 277 822 303 824 337 832 370 852 416 877 458 905 491 930 513 953 526 967 531 980 532 993 530 1006 524 1018 517 1034 498 1043 483 1050 468 1056 451 L1226 447 1242 483 1246 491 1258 506 1272 517 1286 524 1301 526 1322 522 1338 515 1365 496 1389 471 1415 433 1437 390 1444 377 1459 330 1463 290 1462 267 1457 253 1447 237 1434 225 1415 216 1386 207 1347 204 1333 204 Z";

function Part() {
  return (
    <Model viewBox="0 123 1992 915" preserveAspectRatio="xMidYMin slice" role="img" aria-label="零件1">
      <defs>
        <linearGradient id="through" gradientUnits="userSpaceOnUse" x1="900" y1="200" x2="1280" y2="620">
          <stop offset="0" stopColor="#ffffff" />
          <stop offset=".2" stopColor="#fdfdfe" />
          <stop offset=".42" stopColor="#f0f1f5" />
          <stop offset=".62" stopColor="#e5e7ef" />
          <stop offset=".9" stopColor="#dfe2ed" />
        </linearGradient>
      </defs>
      <path d={SIDE} fill="#666873" stroke="#15161a" strokeWidth="1.3" />
      <path d={FACE} fill="#51535e" stroke="#1d1e25" strokeWidth="1.4" />
      <path d={RIM} fill="#555763" stroke="#1d1e25" strokeWidth="1.5" />
      <path d={HOLE} fill="url(#through)" stroke="#1d1e25" strokeWidth="1.4" />
      <path d="M952 200l1 11M1332 193l2 11" stroke="#15161a" strokeWidth="1.5" />

      <path d="M1056 451L1226 447" stroke="#5aa3e6" strokeWidth="4" strokeDasharray="5 3" />
      <path d="M1056 451L1226 447" stroke="#5aa3e6" strokeWidth="2" />
      <path d="M1060 451L1226 447" stroke="#1b2430" strokeWidth="2" strokeDasharray="3 5" />
      <path d="M1159 442v10" stroke="#5aa3e6" strokeWidth="1.5" />
      <g stroke="#85868a" strokeWidth="1.4" fill="#85868a">
        <path d="M1056 452v42M1226 448v43M1029 490L1253 487" />
        <path d="M1056 490l-16-2v4zM1226 487l16-2v4z" stroke="none" />
      </g>
      <text x="1147" y="484" fontFamily="'Liberation Sans', sans-serif" fontSize="23" fill="#858689" stroke="#858689" strokeWidth="1">
        8.00
      </text>
      <path d="M1009 497L1280 493" stroke="#dc7f22" strokeWidth="3.5" />
      <circle cx="1009" cy="497" r="3" fill="#dc7f22" />
      <circle cx="1280" cy="493" r="3" fill="#dc7f22" />

      <path d="M1170 490v16l4-3 3 6 3-1-3-7h5z" fill="#fff" stroke="#333" strokeWidth="1" />
      <path d="M1192 491v13" stroke="#1c3b47" strokeWidth="4" />
      <path d="M1192 492v12" stroke="#8fdcf0" strokeWidth="2" />
      <g transform="translate(1181 506) scale(.6)">
        <path d="M1 14l10 9M13 2l10 9" stroke="#8fdcf0" strokeWidth="2.5" />
        <path d="M6 15L16 6" stroke="#111" strokeWidth="4" />
        <path d="M3 9l0 10 10-2zM19 13l0-10-10 2z" fill="#111" />
      </g>
    </Model>
  );
}

/* ---------- app ---------- */

export default function App() {
  return (
    <Window>
      <GlobalStyle />
      <TitleBar>
        <Brand>
          <IconSvg width="28" height="32" viewBox="0 0 28 32" aria-hidden>
            <path d="M10 2q9-2 8 2-1 3-9 8M8 14q8-2 6 4-3 9-13 12L6 16M27 14q-9-2-9 2 0 2 4 5 4 3 1 6-2 3-9 2" fill="none" stroke="#c0222b" strokeWidth="2.6" />
          </IconSvg>
          <BrandName><b>SOLID</b>WORKS</BrandName>
        </Brand>
        <MenuArrow aria-label="菜单"><Arrow size={13} color="#333" /></MenuArrow>
        <QuickBar>
          {QUICK.map(([name, w, drop, label]) => (
            <QuickButton key={name} $w={w} aria-label={label}>
              <Icon name={name} />
              {drop && <Caret />}
            </QuickButton>
          ))}
        </QuickBar>
        <DocTitle>草图6 ← 零件1 *</DocTitle>
        <SearchBox>
          <Icon name="help" />
          <SearchInput aria-label="搜索" placeholder="搜索 SOLIDWORKS 帮助" />
          <Icon name="search" size={24} />
          <Caret />
        </SearchBox>
        <WindowButtons>
          <button aria-label="登录"><Icon name="user" /></button>
          <button aria-label="帮助"><Icon name="question" size={18} /></button>
          <Caret />
          <button aria-label="最小化"><Icon name="min" size={14} /></button>
          <button aria-label="还原"><Icon name="restore" size={16} /></button>
          <button aria-label="关闭"><Icon name="close" size={14} /></button>
        </WindowButtons>
      </TitleBar>

      <Ribbon>
        <Split>
          <SplitMain><Icon name="exit" />退出草图</SplitMain>
          <SplitDrop aria-label="退出草图选项"><Caret /></SplitDrop>
        </Split>
        <Split>
          <SplitMain><Icon name="smart" />智能尺寸</SplitMain>
          <SplitDrop aria-label="智能尺寸选项"><Caret /></SplitDrop>
        </Split>
        <Divider $gap={1} />
        <ToolGrid>
          {TOOLS.map(([name, drop, label]) => (
            <Tool key={name} aria-label={label}>
              <Icon name={name} />
              {drop && <Caret />}
            </Tool>
          ))}
        </ToolGrid>
        <Divider />
        <BigTool $w={87}><Icon name="trim" size={22} /><span>剪裁实体(<u>T</u>)</span><BigDrop><Caret /></BigDrop></BigTool>
        <BigTool $w={93}><Icon name="convert" size={22} />转换实体引用<BigDrop><Caret /></BigDrop></BigTool>
        <BigTool $w={58} $low><Icon name="offset" />{"等距实\n体"}</BigTool>
        <BigTool $w={52} $low $dim><Icon name="surface" />{"曲面上\n偏移"}</BigTool>
        <RowTools>
          <RowTool><Icon name="mirror" /><span>镜向实体</span></RowTool>
          <RowTool><Icon name="pattern" /><span>线性草图阵列</span><Caret /></RowTool>
          <RowTool><Icon name="move" /><span>移动实体</span><Caret /></RowTool>
        </RowTools>
        <Divider />
        <BigTool $w={135}><Icon name="relations" size={22} />显示/删除几何关系<BigDrop><Caret /></BigDrop></BigTool>
        <BigTool $w={53} $low><Icon name="repair" />{"修复草\n图"}</BigTool>
        <Divider />
        <BigTool $w={55} $dim><Icon name="snap" size={22} />快速...<BigDrop><Caret $dim /></BigDrop></BigTool>
        <Divider />
        <BigTool $w={57} $low><Icon name="rapid" />{"快速草\n图"}</BigTool>
        <BigTool $w={73} $low $on><Icon name="instant" />Instant2D</BigTool>
        <BigTool $w={54} $low $on><Icon name="shade" />{"上色草\n图轮廓"}</BigTool>
      </Ribbon>

      <Stage>
        <Part />
        <CommandTabs>
          {TABS.map((t) => (
            <CommandTab key={t} $on={t === "草图"} $short={t.length === 2}>{t}</CommandTab>
          ))}
        </CommandTabs>
        <Body>
          <Panel>
            <Grip><Dot /></Grip>
            <PanelTabs>
              <PanelTab $on aria-label="设计树"><Icon name="block" /></PanelTab>
              <PanelTab aria-label="属性"><Icon name="list" /></PanelTab>
              <PanelTab aria-label="配置"><Icon name="tree" /></PanelTab>
              <PanelTab aria-label="尺寸专家"><Icon name="target" size={18} /></PanelTab>
              <PanelTab aria-label="外观"><Icon name="ball" /></PanelTab>
              <PanelTab $cut aria-label="加工"><Icon name="cam" /></PanelTab>
              <PanelArrow aria-label="向左"><Arrow left size={8} /></PanelArrow>
              <PanelArrow aria-label="向右"><Arrow size={8} /></PanelArrow>
            </PanelTabs>
            <Filter>
              <Icon name="funnel" />
              <SearchInput aria-label="过滤" />
            </Filter>
            <Tree>
              <RootRow><Icon name="part" />{"零件1  (默认<<默认>_显示状态 1>)"}</RootRow>
              {TREE.map(([icon, label, open]) => (
                <TreeRow key={label}>
                  <Twist $show={open} />
                  <Icon name={icon} />
                  {label}
                </TreeRow>
              ))}
              <TreeRow $dim><Twist $show /><Icon name="flat" />平板型式1</TreeRow>
              <Rollback />
              <TreeRow><Twist /><Icon name="sketch" />(-) 草图6</TreeRow>
            </Tree>
            <ScrollRow>
              <ScrollButton aria-label="向左滚动">
                <IconSvg width="10" height="12" viewBox="0 0 10 12"><path d="M8 1L3 6l5 5" fill="none" stroke="#444" strokeWidth="2" /></IconSvg>
              </ScrollButton>
              <Thumb />
              <ScrollButton aria-label="向右滚动">
                <IconSvg width="10" height="12" viewBox="0 0 10 12"><path d="M2 1l5 5-5 5" fill="none" stroke="#444" strokeWidth="2" /></IconSvg>
              </ScrollButton>
            </ScrollRow>
            <PanelHandle aria-label="折叠面板"><Dot /></PanelHandle>
          </Panel>

          <Canvas>
            <ViewBar>
              {VIEW.map(([name, w, drop, label]) => (
                <ViewTool key={name} $w={w} aria-label={label}>
                  <Icon name={name} />
                  {drop && <Speck />}
                </ViewTool>
              ))}
            </ViewBar>
            <TaskPane>
              {TASKS.map(([name, label], i) => (
                <TaskButton key={name} $on={i === 0} aria-label={label}><Icon name={name} /></TaskButton>
              ))}
            </TaskPane>
            <Confirm>
              <svg width="80" height="62" viewBox="0 0 80 62" aria-hidden>
                <path d="M26 3H5v18q0 7 8 7h13" fill="none" stroke="#c3d6e2" strokeWidth="2" />
                <path d="M28 28l9-10v5q8 0 12-6 0 14-12 15v6z" fill="#c9dde7" stroke="#a9c3d2" />
                <path d="M55 38l18 18M73 38L55 56" stroke="#e3b3bd" strokeWidth="8" />
              </svg>
            </Confirm>
            <Triad width="64" height="60" viewBox="0 0 64 60" aria-hidden>
              <text x="8" y="12" fontFamily="'Liberation Mono', monospace" fontSize="14" fill="#1f9d2c">Y</text>
              <path d="M10 24h6v24h-6z" fill="#2d7a35" />
              <path d="M13 12l6 13H7z" fill="#1c5c22" />
              <path d="M13 46h28v6H13z" fill="#d2485a" stroke="#8f1524" />
              <path d="M40 43l12 6-12 6z" fill="#b3122a" />
              <path d="M9 44h7v7h-5z" fill="#1a1670" />
              <circle cx="12" cy="41" r="6" fill="#1c17a8" />
              <path d="M8 31h5l-3 5" fill="none" stroke="#2a35c0" strokeWidth="1.3" />
              <text x="51" y="54" fontFamily="'Liberation Mono', monospace" fontSize="14" fill="#d0283a">X</text>
            </Triad>
          </Canvas>
        </Body>
        <DocButtons>
          <button aria-label="左窗格"><Icon name="dockL" size={15} /></button>
          <button aria-label="右窗格"><Icon name="dockR" size={15} /></button>
          <button aria-label="最小化文档"><Icon name="min" size={15} /></button>
          <button aria-label="还原文档"><Icon name="restore" size={15} /></button>
          <button aria-label="关闭文档"><Icon name="close" size={15} /></button>
        </DocButtons>
      </Stage>

      <BottomTabs>
        <NavButton aria-label="第一个"><Arrow left bar color="#8080a0" /></NavButton>
        <NavButton aria-label="上一个"><Arrow left color="#8080a0" /></NavButton>
        <NavButton aria-label="下一个"><Arrow color="#8080a0" /></NavButton>
        <NavButton aria-label="最后一个"><Arrow bar color="#8080a0" /></NavButton>
        <BottomTab $on $w={63} $pad={15}>模型</BottomTab>
        <BottomTab $w={80} $pad={9}>3D 视图</BottomTab>
        <BottomTab $w={112} $pad={9}>运动算例 1</BottomTab>
      </BottomTabs>
      <StatusBar>
        <StatusText>选择一个或两个边线/顶点后再选择尺寸文字标注的位置。</StatusText>
        <StatusCell $w={87}>长度: 8mm</StatusCell>
        <StatusCell $w={57} $line>欠定义</StatusCell>
        <StatusCell $w={8} $line />
        <StatusCell $w={102} $line>在编辑 草图6</StatusCell>
        <StatusCell $w={33} $pad={14} $line><Icon name="light" size={14} /></StatusCell>
        <StatusCell $w={181} $pad={34}>MMGS<Caret $up /></StatusCell>
        <Icon name="tag" size={18} />
      </StatusBar>
    </Window>
  );
}
